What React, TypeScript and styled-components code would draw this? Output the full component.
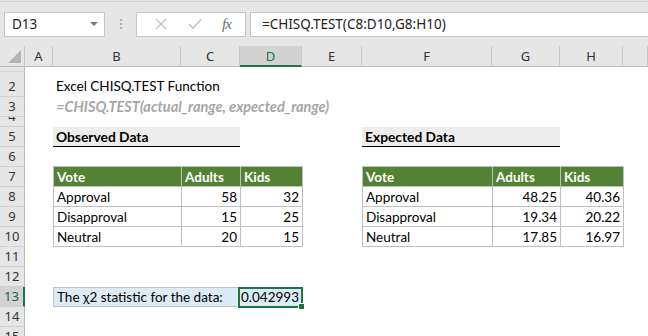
import React from 'react';
import styled, { createGlobalStyle, css } from 'styled-components';

const GlobalStyle = createGlobalStyle`
  html, body {
    margin: 0;
    padding: 0;
    width: 648px;
    height: 336px;
    overflow: hidden;
    background: #ffffff;
  }
`;

const CELL_FONT = `Lato, "Liberation Sans", sans-serif`;
const UI_FONT = `"Noto Sans", "Open Sans", sans-serif`;
const GREEN = '#217346';

const Window = styled.div`
  width: 648px;
  height: 336px;
  display: flex;
  flex-direction: column;
  overflow: hidden;
  background: #e6e6e6;
`;

const FormulaBar = styled.div`
  height: 45px;
  flex: none;
  box-sizing: border-box;
  border-top: 1px solid #d4d4d4;
  margin-top: 1px;
  display: flex;
  align-items: center;
  padding: 0 0 0 4px;
`;

const NameBox = styled.div`
  width: 101px;
  height: 25px;
  box-sizing: border-box;
  background: #fff;
  border: 1px solid #c6c6c6;
  display: flex;
  align-items: center;
  justify-content: space-between;
  padding: 0 6px 0 7px;
  font-family: ${UI_FONT};
  font-size: 13.5px;
  color: #222;
`;

const DropArrow = styled.span`
  width: 0;
  height: 0;
  border-left: 4px solid transparent;
  border-right: 4px solid transparent;
  border-top: 4px solid #7a7a7a;
`;

const Grip = styled.div`
  width: 31px;
  display: flex;
  flex-direction: column;
  align-items: center;
  gap: 2px;
  span {
    width: 2px;
    height: 2px;
    background: #b0b0b0;
  }
`;

const IconBox = styled.div`
  width: 110px;
  height: 25px;
  box-sizing: border-box;
  background: #fff;
  border: 1px solid #c6c6c6;
  display: flex;
  align-items: center;
  justify-content: space-around;
  padding: 0 4px 0 8px;
`;

const FxLabel = styled.span`
  font-family: "Liberation Serif", serif;
  font-style: italic;
  font-size: 15px;
  color: #6a6a6a;
  letter-spacing: -1px;
`;

const FormulaInput = styled.div`
  flex: 1;
  height: 25px;
  margin-left: 4px;
  box-sizing: border-box;
  background: #fff;
  border: 1px solid #c6c6c6;
  border-right: none;
  display: flex;
  align-items: center;
  padding-left: 11px;
  font-family: ${UI_FONT};
  font-size: 13.5px;
  color: #222;
`;

const Sheet = styled.div`
  display: grid;
  grid-template-columns: 25px 28px 128px 59px 62px 60px 130px 68px 63px 1fr;
  grid-template-rows: 21px 5px 25px 20px 10px repeat(11, 20px);
  background: #fff;
  font-family: ${CELL_FONT};
  font-size: 13.5px;
  color: #000;
`;

const Corner = styled.div`
  grid-row: 1;
  grid-column: 1;
  background: #e6e6e6;
  border-right: 1px solid #c8c8c8;
  border-bottom: 1px solid #b8b8b8;
  position: relative;
  &::after {
    content: '';
    position: absolute;
    right: 3px;
    bottom: 3px;
    border-left: 13px solid transparent;
    border-bottom: 13px solid #b4b4b4;
  }
`;

const ColHead = styled.div<{ $col: number; $active?: boolean }>`
  grid-row: 1;
  grid-column: ${(p) => p.$col};
  background: ${(p) => (p.$active ? '#d2d2d2' : '#e6e6e6')};
  border-right: 1px solid #c8c8c8;
  border-bottom: ${(p) => (p.$active ? `2px solid ${GREEN}` : '1px solid #b8b8b8')};
  display: flex;
  align-items: center;
  justify-content: center;
  font-family: ${UI_FONT};
  font-size: 13px;
  color: ${(p) => (p.$active ? GREEN : '#333')};
`;

const RowHead = styled.div<{ $row: number; $active?: boolean }>`
  grid-row: ${(p) => p.$row + 1};
  grid-column: 1;
  background: ${(p) => (p.$active ? '#d2d2d2' : '#e6e6e6')};
  border-right: ${(p) => (p.$active ? `2px solid ${GREEN}` : '1px solid #b8b8b8')};
  border-bottom: 1px solid #d0d0d0;
  display: flex;
  align-items: flex-end;
  justify-content: center;
  overflow: hidden;
  font-family: ${UI_FONT};
  font-size: 13px;
  line-height: 17px;
  padding-bottom: 1px;
  box-sizing: border-box;
  color: ${(p) => (p.$active ? '#1f5f4a' : '#333')};
`;

const Area = styled.div<{ $row: number; $col: number; $rowSpan?: number; $colSpan?: number }>`
  grid-row: ${(p) => `${p.$row + 1} / span ${p.$rowSpan ?? 1}`};
  grid-column: ${(p) => `${p.$col} / span ${p.$colSpan ?? 1}`};
  min-width: 0;
  display: flex;
  align-items: flex-end;
  white-space: nowrap;
`;

const Title = styled(Area)`
  font-size: 13.5px;
  padding: 0 0 3px 3px;
`;

const Syntax = styled(Area)`
  font-size: 14.5px;
  font-style: italic;
  font-weight: 700;
  color: #a6a6a6;
  padding: 0 0 2px 3px;
`;

const SectionLabel = styled(Area)`
  background: #ededed;
  border-bottom: 1px solid #000;
  font-weight: 700;
  font-size: 13.8px;
  padding: 0 0 1px 3px;
`;

const DataTable = styled.table`
  width: 100%;
  height: 100%;
  table-layout: fixed;
  border-collapse: collapse;
  font-size: 13.5px;
  td, th {
    border: 1px solid #bfbfbf;
    padding: 0 3px;
    height: 19px;
    white-space: nowrap;
    overflow: hidden;
  }
  th {
    background: #548235;
    color: #fff;
    font-weight: 700;
    text-align: left;
  }
`;

const NumCell = styled.td`
  text-align: right;
`;

const ResultBox = styled(Area)<{ $selected?: boolean }>`
  background: #ddebf7;
  border: 1px solid #bcc3ca;
  box-sizing: border-box;
  font-size: 13.5px;
  padding: 0 2px 1px 3px;
  ${(p) =>
    p.$selected &&
    css`
      justify-content: flex-end;
      position: relative;
      border-left: none;
      &::before {
        content: '';
        position: absolute;
        inset: -1px -2px -2px -2px;
        border: 2px solid ${GREEN};
        pointer-events: none;
      }
      &::after {
        content: '';
        position: absolute;
        right: -4px;
        bottom: -4px;
        width: 5px;
        height: 5px;
        background: ${GREEN};
        border: 1px solid #fff;
      }
    `}
`;

type Row = { vote: string; adults: string; kids: string };

const observed: Row[] = [
  { vote: 'Approval', adults: '58', kids: '32' },
  { vote: 'Disapproval', adults: '15', kids: '25' },
  { vote: 'Neutral', adults: '20', kids: '15' },
];

const expected: Row[] = [
  { vote: 'Approval', adults: '48.25', kids: '40.36' },
  { vote: 'Disapproval', adults: '19.34', kids: '20.22' },
  { vote: 'Neutral', adults: '17.85', kids: '16.97' },
];

const columns = ['A', 'B', 'C', 'D', 'E', 'F', 'G', 'H', ''];
const rows = [1, 2, 3, 4, 5, 6, 7, 8, 9, 10, 11, 12, 13, 14, 15];

const VoteTable: React.FC<{ data: Row[] }> = ({ data }) => (
  <DataTable>
    <colgroup>
      <col />
      <col />
      <col />
    </colgroup>
    <thead>
      <tr>
        <th>Vote</th>
        <th>Adults</th>
        <th>Kids</th>
      </tr>
    </thead>
    <tbody>
      {data.map((r) => (
        <tr key={r.vote}>
          <td>{r.vote}</td>
          <NumCell>{r.adults}</NumCell>
          <NumCell>{r.kids}</NumCell>
        </tr>
      ))}
    </tbody>
  </DataTable>
);

const ObservedCols = styled(Area)`
  col:nth-child(1) { width: 128px; }
  col:nth-child(2) { width: 59px; }
  col:nth-child(3) { width: 62px; }
`;

const ExpectedCols = styled(Area)`
  col:nth-child(1) { width: 130px; }
  col:nth-child(2) { width: 68px; }
  col:nth-child(3) { width: 63px; }
`;

const App: React.FC = () => {
  return (
    <>
      <GlobalStyle />
      <Window>
        <FormulaBar>
          <NameBox>
            D13
            <DropArrow />
          </NameBox>
          <Grip>
            <span />
            <span />
            <span />
          </Grip>
          <IconBox>
            <svg width="12" height="12" viewBox="0 0 12 12">
              <path d="M1 1 L11 11 M11 1 L1 11" stroke="#c3c3c3" strokeWidth="1.4" fill="none" />
            </svg>
            <svg width="14" height="12" viewBox="0 0 14 12">
              <path d="M1 6 L5 10 L13 1.5" stroke="#c3c3c3" strokeWidth="1.6" fill="none" />
            </svg>
            <FxLabel>fx</FxLabel>
          </IconBox>
          <FormulaInput>=CHISQ.TEST(C8:D10,G8:H10)</FormulaInput>
        </FormulaBar>
        <Sheet>
          <Corner />
          {columns.map((c, i) => (
            <ColHead key={i} $col={i + 2} $active={c === 'D'}>
              {c}
            </ColHead>
          ))}
          {rows.map((r) => (
            <RowHead key={r} $row={r} $active={r === 13}>
              {r}
            </RowHead>
          ))}

          <Title $row={2} $col={3} $colSpan={4}>
            Excel CHISQ.TEST Function
          </Title>
          <Syntax $row={3} $col={3} $colSpan={5}>
            =CHISQ.TEST(actual_range, expected_range)
          </Syntax>

          <SectionLabel $row={5} $col={3} $colSpan={2}>
            Observed Data
          </SectionLabel>
          <SectionLabel $row={5} $col={7} $colSpan={2}>
            Expected Data
          </SectionLabel>

          <ObservedCols $row={7} $col={3} $colSpan={3} $rowSpan={4}>
            <VoteTable data={observed} />
          </ObservedCols>
          <ExpectedCols $row={7} $col={7} $colSpan={3} $rowSpan={4}>
            <VoteTable data={expected} />
          </ExpectedCols>

          <ResultBox $row={13} $col={3} $colSpan={2}>
            The χ2 statistic for the data:
          </ResultBox>
          <ResultBox $row={13} $col={5} $selected>
            0.042993
          </ResultBox>
        </Sheet>
      </Window>
    </>
  );
};

export default App;
